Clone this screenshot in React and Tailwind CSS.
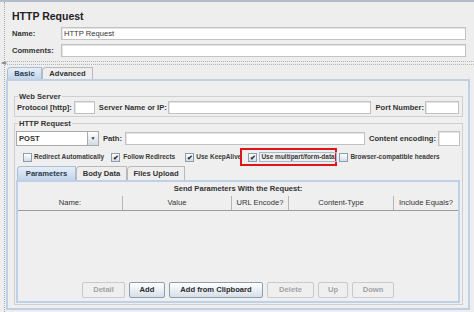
import React from "react";

function Field({ className = "", children }) {
  return (
    <div
      className={`h-[13px] bg-white border border-[#c2c2c2] shadow-[inset_1px_1px_0_#e4e4e4] flex items-center pl-[2px] text-[7.6px] text-[#333] ${className}`}
    >
      {children}
    </div>
  );
}

function Check({ on }) {
  return (
    <span className="w-[9px] h-[9px] shrink-0 border border-[#8c9cb1] bg-gradient-to-b from-white to-[#d3dce7] flex items-center justify-center text-[7px] leading-none text-[#2b2b2b]">
      {on ? "✔" : ""}
    </span>
  );
}

function Btn({ off, className = "", children }) {
  return (
    <div
      className={`h-[16px] flex items-center justify-center border rounded-[2px] text-[7.6px] font-bold ${
        off
          ? "border-[#c9c9c9] bg-[#efefef] text-[#a2a2a2]"
          : "border-[#8e9db0] bg-gradient-to-b from-white to-[#d6dfe9] text-[#2a2a2a]"
      } ${className}`}
    >
      {children}
    </div>
  );
}

function Tab({ on, className = "", children }) {
  return (
    <div
      className={`h-full flex items-center justify-center text-[7.6px] font-bold border border-b-0 rounded-tl-[4px] rounded-tr-[1px] ${
        on
          ? "border-[#a8bed6] bg-gradient-to-b from-[#e6eef7] to-[#c2d5ea] text-[#2a3a4e]"
          : "border-[#b9b9b9] bg-[#eeeeee] text-[#333]"
      } ${className}`}
    >
      {children}
    </div>
  );
}

export default function App() {
  return (
    <div className="w-[474px] h-[312px] overflow-hidden bg-[#eeeeee] flex flex-col font-['Liberation_Sans',Arial,sans-serif] text-[#2b2b2b]">
      <div className="h-[2px] shrink-0 bg-[#b3bcc8]" />
      <div className="flex flex-1 min-h-0">
        <div className="w-[5px] shrink-0 border-r border-dotted border-[#a9a9a9]" />
        <div className="flex-1 min-w-0 flex flex-col">
          <div className="mt-[6px] h-[16px] leading-[16px] pl-[7px] text-[10.5px] font-bold text-[#222]">
            HTTP Request
          </div>

          <div className="mt-[3px] flex items-center h-[13px]">
            <div className="w-[56px] pl-[7px] text-[7.6px] font-bold text-[#333]">Name:</div>
            <Field className="flex-1 mr-[8px]">HTTP Request</Field>
          </div>
          <div className="mt-[4px] flex items-center h-[13px]">
            <div className="w-[56px] pl-[7px] text-[7.6px] font-bold text-[#333]">Comments:</div>
            <Field className="flex-1 mr-[8px]" />
          </div>

          <div className="mt-[4px] h-[4px] border-y border-dotted border-[#b3b3b3] flex items-center">
            <span className="text-[4px] leading-none text-[#888] -ml-[4px]">◀▶</span>
          </div>

          <div className="mt-[2px] h-[12px] flex pl-[2px] shrink-0">
            <Tab on className="w-[35px]">Basic</Tab>
            <Tab className="w-[51px]">Advanced</Tab>
          </div>

          <div className="ml-[1px] mr-[4px] mb-[2px] flex-1 min-h-0 border-2 border-[#bdd0e6] bg-[#efefef]">
            <fieldset className="mt-[11px] ml-[6px] mr-[5px] border border-[#cfcfcf] pb-[2px]">
              <legend className="ml-[3px] px-[1px] text-[7.6px] leading-[9px] font-bold text-[#333]">
                Web Server
              </legend>
              <div className="flex items-center h-[13px] text-[7.6px] font-bold text-[#333]">
                <span className="ml-[2px] mr-[2px]">Protocol [http]:</span>
                <Field className="w-[21px]" />
                <span className="ml-[4px] mr-[1px] whitespace-nowrap">Server Name or IP:</span>
                <Field className="flex-1" />
                <span className="ml-[4px] mr-[1px] whitespace-nowrap">Port Number:</span>
                <Field className="w-[34px] mr-[3px]" />
              </div>
            </fieldset>

            <fieldset className="mt-[2px] ml-[6px] mr-[5px] border border-[#cfcfcf] pb-[1px]">
              <legend className="ml-[3px] px-[1px] text-[7.6px] leading-[9px] font-bold text-[#333]">
                HTTP Request
              </legend>
              <div className="mt-[3px] flex items-center h-[15px] text-[7.6px] font-bold text-[#333]">
                <div className="ml-[1px] w-[83px] h-[15px] flex border border-[#a9a9a9] bg-white">
                  <span className="flex-1 flex items-center pl-[2px]">POST</span>
                  <span className="w-[11px] border-l border-[#a9a9a9] bg-gradient-to-b from-white to-[#d3dbe5] flex items-center justify-center text-[5px] text-[#333]">
                    ▼
                  </span>
                </div>
                <span className="ml-[4px] mr-[3px]">Path:</span>
                <Field className="flex-1" />
                <span className="ml-[4px] mr-[2px] whitespace-nowrap">Content encoding:</span>
                <Field className="w-[22px] h-[15px] mr-[2px]" />
              </div>

              <div className="mt-[6px] h-[10px] flex items-center text-[6.5px] font-bold text-[#3a3a3a] whitespace-nowrap">
                <span className="ml-[8px]"><Check /></span>
                <span className="ml-[2px]">Redirect Automatically</span>
                <span className="ml-[7px]"><Check on /></span>
                <span className="ml-[3px]">Follow Redirects</span>
                <span className="ml-[10px]"><Check on /></span>
                <span className="ml-[2px]">Use KeepAlive</span>
                <div className="-ml-[1px] -my-[4px] h-[18px] w-[97px] border-2 border-[#e0141b] flex items-center pl-[6px]">
                  <Check on />
                  <span className="ml-[2px] px-[1px] border border-[#a9bacd] leading-[8px]">
                    Use multipart/form-data
                  </span>
                </div>
                <span className="ml-[2px]"><Check /></span>
                <span className="ml-[2px]">Browser-compatible headers</span>
              </div>

              <div className="mt-[4px] h-[14px] ml-[2px] flex">
                <Tab on className="w-[59px]">Parameters</Tab>
                <Tab className="w-[51px]">Body Data</Tab>
                <Tab className="w-[58px]">Files Upload</Tab>
              </div>

              <div className="ml-[1px] mr-[2px] h-[123px] border-2 border-[#bdd0e6] flex flex-col">
                <div className="h-[14px] leading-[14px] text-center text-[7.6px] font-bold text-[#333]">
                  Send Parameters With the Request:
                </div>
                <div className="h-[15px] flex border-b border-[#9c9c9c] text-[7.6px] text-[#333]">
                  <div className="w-[105px] flex items-center justify-center border-r border-[#b5b5b5]">Name:</div>
                  <div className="w-[109px] flex items-center justify-center border-r border-[#b5b5b5]">Value</div>
                  <div className="w-[57px] flex items-center justify-center border-r border-[#b5b5b5]">URL Encode?</div>
                  <div className="w-[105px] flex items-center justify-center border-r border-[#b5b5b5]">Content-Type</div>
                  <div className="flex-1 flex items-center justify-center">Include Equals?</div>
                </div>
                <div className="flex-1" />
                <div className="h-[16px] mb-[3px] flex justify-center gap-[4px]">
                  <Btn off className="w-[43px]">Detail</Btn>
                  <Btn className="w-[36px]">Add</Btn>
                  <Btn className="w-[94px]">Add from Clipboard</Btn>
                  <Btn off className="w-[47px]">Delete</Btn>
                  <Btn off className="w-[30px]">Up</Btn>
                  <Btn off className="w-[42px]">Down</Btn>
                </div>
              </div>
            </fieldset>
          </div>
        </div>
      </div>
    </div>
  );
}
